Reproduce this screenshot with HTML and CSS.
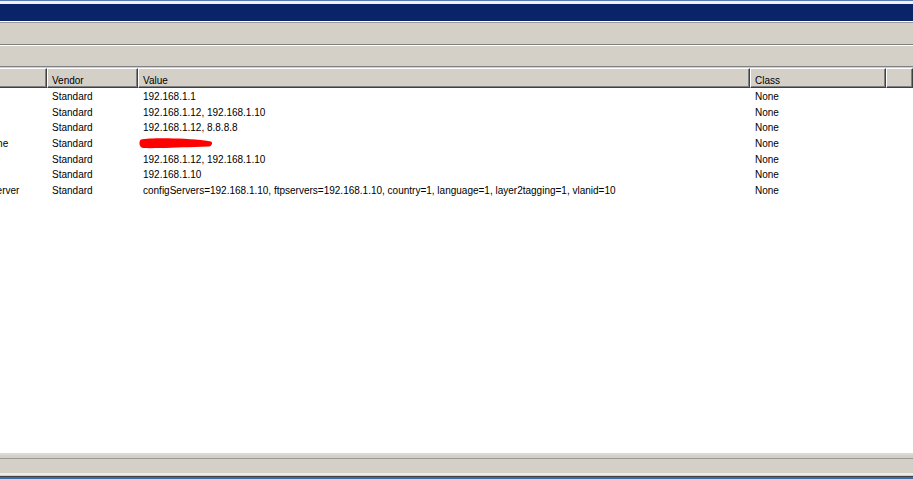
FILE: index.html
```html
<!DOCTYPE html>
<html>
<head>
<meta charset="utf-8">
<link rel="stylesheet" href="styles.css">
</head>
<body>
<div class="window">
  <div class="frame-top"></div>
  <div class="frame-light"></div>
  <div class="titlebar"></div>
  <div class="menubar"></div>
  <div class="toolbar"></div>
  <div class="listview">
    <div class="header">
      <div class="hcell"></div>
      <div class="hcell">Vendor</div>
      <div class="hcell">Value</div>
      <div class="hcell">Class</div>
      <div class="hcell"></div>
    </div>
    <div class="rows">
      <div class="row"><div class="cell"></div><div class="cell">Standard</div><div class="cell">192.168.1.1</div><div class="cell">None</div><div class="cell"></div></div>
      <div class="row"><div class="cell"></div><div class="cell">Standard</div><div class="cell">192.168.1.12, 192.168.1.10</div><div class="cell">None</div><div class="cell"></div></div>
      <div class="row"><div class="cell"></div><div class="cell">Standard</div><div class="cell">192.168.1.12, 8.8.8.8</div><div class="cell">None</div><div class="cell"></div></div>
      <div class="row"><div class="cell">015 DNS Domain Name</div><div class="cell">Standard</div><div class="cell redacted"><svg class="scribble" width="80" height="16" viewBox="0 0 80 16"><path d="M3,4.5 C12,2.5 47,3 67,5.5 L73,6.5 C75,7.5 74,11 71,11.5 L57,12 C37,12.5 17,13.5 5,13 C1,12.5 0.5,6 3,4.5 Z" fill="#ff0000"/></svg></div><div class="cell">None</div><div class="cell"></div></div>
      <div class="row"><div class="cell"></div><div class="cell">Standard</div><div class="cell">192.168.1.12, 192.168.1.10</div><div class="cell">None</div><div class="cell"></div></div>
      <div class="row"><div class="cell"></div><div class="cell">Standard</div><div class="cell">192.168.1.10</div><div class="cell">None</div><div class="cell"></div></div>
      <div class="row"><div class="cell">156 ShoreTel Voice Server</div><div class="cell">Standard</div><div class="cell">configServers=192.168.1.10, ftpservers=192.168.1.10, country=1, language=1, layer2tagging=1, vlanid=10</div><div class="cell">None</div><div class="cell"></div></div>
    </div>
  </div>
  <div class="statusbar"></div>
  <div class="frame-bottom"></div>
</div>
</body>
</html>
```
FILE: styles.css
```css
html, body {
  margin: 0;
  padding: 0;
  background: #ffffff;
  overflow: hidden;
}
.window {
  display: flex;
  flex-direction: column;
  height: 479px;
  width: 913px;
  overflow: hidden;
  font-family: "Liberation Sans", Arial, sans-serif;
  font-size: 10px;
  color: #000000;
}
.frame-top {
  height: 1px;
  background: #5a7cb0;
  flex: none;
}
.frame-light {
  height: 3px;
  background: #f2f2f2;
  flex: none;
}
.titlebar {
  height: 17px;
  background: #0a246a;
  border-bottom: 1px solid #ffffff;
  flex: none;
}
.menubar {
  box-sizing: border-box;
  height: 24px;
  background: #d4d0c8;
  border-top: 1px solid #9a9a9a;
  border-bottom: 1px solid #ffffff;
  box-shadow: inset 0 -1px 0 #808080;
  flex: none;
}
.toolbar {
  box-sizing: border-box;
  height: 22px;
  background: #d4d0c8;
  border-bottom: 1px solid #d4d0c8;
  box-shadow: inset 0 -1px 0 #808080;
  flex: none;
}
.listview {
  flex: 1;
  display: flex;
  flex-direction: column;
  background: #ffffff;
  overflow: hidden;
}
.header,
.row {
  display: grid;
  grid-template-columns: 151px 91px 612px 136px 1fr;
  margin-left: -104px;
  width: calc(100% + 104px);
}
.header {
  flex: none;
  height: 20px;
  background: #d4d0c8;
}
.hcell {
  box-sizing: border-box;
  height: 20px;
  padding: 5px 0 0 4px;
  line-height: 13px;
  border-top: 1px solid #ffffff;
  border-left: 1px solid #ffffff;
  border-right: 1px solid #404040;
  border-bottom: 1px solid #404040;
  box-shadow: inset -1px -1px 0 #808080;
  white-space: nowrap;
  overflow: hidden;
}
.rows {
  flex: 1;
  padding-top: 1px;
}
.row {
  height: 15.67px;
  line-height: 15.67px;
}
.cell {
  padding-left: 5px;
  white-space: nowrap;
  overflow: hidden;
}
.redacted {
  position: relative;
  padding-left: 0;
  overflow: visible;
}
.scribble {
  position: absolute;
  left: 0;
  top: -1px;
}
.statusbar {
  box-sizing: border-box;
  height: 22px;
  background: #d4d0c8;
  border-top: 2px solid #dedad3;
  flex: none;
  box-shadow: inset 0 3px 0 #d4d0c8, inset 0 4px 0 #9a9a9a, inset 0 -2px 0 #eeece8;
}
.frame-bottom {
  height: 4px;
  flex: none;
  background: #3a6ea5;
  border-top: 1px solid #d4d0c8;
  box-shadow: inset 0 1px 0 #404040;
  box-sizing: border-box;
}
```
